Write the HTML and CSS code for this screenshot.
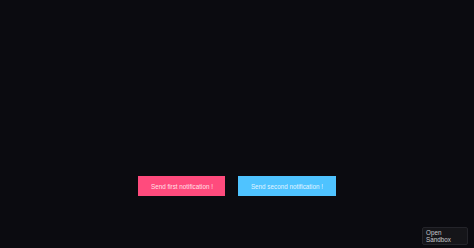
FILE: index.html
```html
<!DOCTYPE html>
<html lang="en">
  <head>
    <meta charset="UTF-8" />
    <title>Notifications</title>
    <link rel="stylesheet" href="styles.css">
  </head>
  <body>
    <div class="stage">
      <div class="actions">
        <button class="btn btn-first">Send first notification !</button>
        <button class="btn btn-second">Send second notification !</button>
      </div>
    </div>
    <a class="sandbox-link" href="#">Open<br />Sandbox</a>
  </body>
</html>
```

FILE: styles.css
```css
html,
body {
  margin: 0;
  height: 100%;
}
body {
  font-family: "Liberation Sans", Arial, sans-serif;
  background-color: #0b0b10;
}
.stage {
  height: 100%;
  display: flex;
  flex-direction: column;
  justify-content: flex-end;
  align-items: center;
  box-sizing: border-box;
  padding-bottom: 52px;
}
.actions {
  display: flex;
  gap: 13px;
}
.btn {
  height: 20px;
  padding: 0 12.5px;
  border: none;
  border-radius: 0;
  font-family: "Liberation Sans", Arial, sans-serif;
  font-size: 6.3px;
  color: rgba(255, 255, 255, 0.85);
  cursor: pointer;
}
.btn-first {
  background-color: #ff4b7d;
}
.btn-second {
  background-color: #4fc3ff;
}
.sandbox-link {
  position: fixed;
  right: 6px;
  bottom: 3px;
  width: 46px;
  height: 18px;
  box-sizing: border-box;
  padding: 1px 0 0 3px;
  background-color: #151519;
  border: 1px solid #24242a;
  border-radius: 2px;
  color: #c9c9cf;
  font-size: 6.3px;
  line-height: 7px;
  text-decoration: none;
}
```
